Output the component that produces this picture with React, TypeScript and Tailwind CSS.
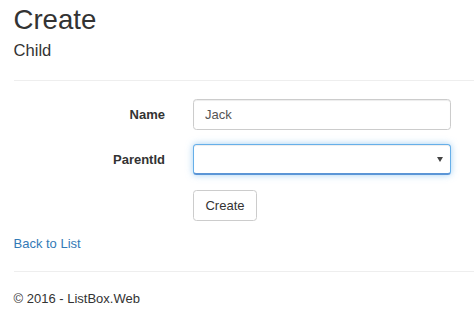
import { useState } from 'react';

export default function App() {
  const [name, setName] = useState('Jack');

  return (
    <div className="min-h-[316px] bg-white pl-[13.5px] font-['Liberation_Sans',Arial,sans-serif] text-[13px] text-[#333]">
      <h2 className="mt-[5px] text-[27.6px] leading-[30px]">Create</h2>
      <h4 className="mt-[7px] text-[16.6px] leading-[18px]">Child</h4>
      <div className="mt-[20px] border-t border-[#eee]" />

      {/* Form */}
      <form className="mt-[18px]" onSubmit={(e) => e.preventDefault()}>
        <div className="flex h-[31px] items-center">
          <label className="w-[151.5px] text-right font-bold">Name</label>
          <input
            value={name}
            onChange={(e) => setName(e.target.value)}
            className="ml-[28px] h-[31px] w-[258px] rounded-[3.5px] border border-[#ccc] px-[11px] text-[#555] shadow-[inset_0_1px_1px_rgba(0,0,0,0.075)] outline-none"
          />
        </div>

        <div className="mt-[14px] flex h-[31px] items-center">
          <label className="w-[151.5px] text-right font-bold">ParentId</label>
          <div className="relative ml-[28px] h-[31px] w-[258px]">
            <select className="h-full w-full appearance-none rounded-[3.5px] border border-[#66afe9] border-b-2 border-b-[#5b95d6] bg-white px-[11px] text-[#555] shadow-[inset_0_1px_1px_rgba(0,0,0,0.075),0_0_7px_rgba(102,175,233,0.6)] outline-none">
              <option value=""></option>
            </select>
            <svg className="pointer-events-none absolute right-[8px] top-[13px]" width="6" height="5" viewBox="0 0 6 5">
              <path d="M0 0h6L3 5z" fill="#444" />
            </svg>
          </div>
        </div>

        <div className="mt-[15px] pl-[179.5px]">
          <button
            type="submit"
            className="h-[31px] w-[64px] rounded-[3.5px] border border-[#ccc] bg-white text-[#333]"
          >
            Create
          </button>
        </div>
      </form>

      <div className="mt-[13.5px] leading-[18px]">
        <a href="#" className="text-[#337ab7]">Back to List</a>
      </div>

      <div className="mt-[18.5px] border-t border-[#eee]" />
      <footer className="mt-[17.5px] leading-[18px]">
        <p>&copy; 2016 - ListBox.Web</p>
      </footer>
    </div>
  );
}
